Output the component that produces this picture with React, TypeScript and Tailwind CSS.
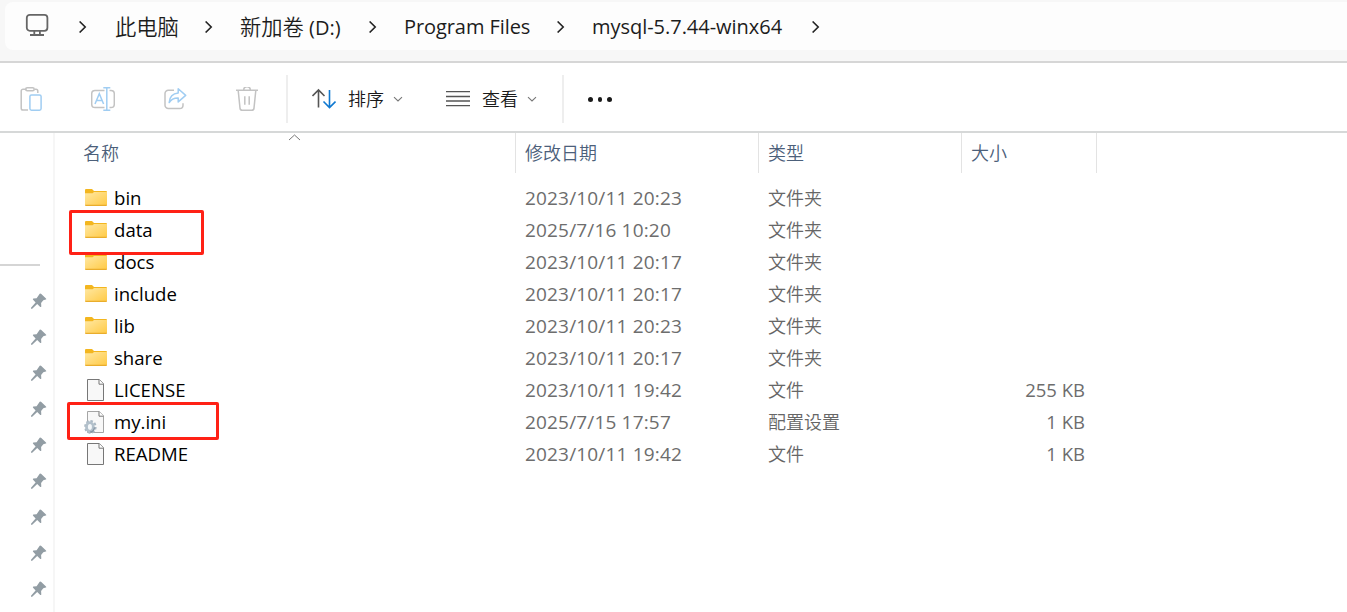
import type { ReactNode } from "react";

const crumbs = [
  { label: "此电脑", className: "w-[64px] text-[21.3px] font-[350] -ml-px mr-px" },
  { label: "新加卷", suffix: "(D:)", className: "w-[104px] text-[21.3px] font-[350] -mt-px" },
  { label: "Program Files", className: "w-[128px] text-[20px] tracking-[-0.08px]" },
  { label: "mysql-5.7.44-winx64", className: "w-[195px] text-[20px] tracking-[-0.03px]" },
];

type Kind = "folder" | "file" | "ini";

const files: { name: string; date: string; type: string; size?: string; kind: Kind }[] = [
  { name: "bin", date: "2023/10/11 20:23", type: "文件夹", kind: "folder" },
  { name: "data", date: "2025/7/16 10:20", type: "文件夹", kind: "folder" },
  { name: "docs", date: "2023/10/11 20:17", type: "文件夹", kind: "folder" },
  { name: "include", date: "2023/10/11 20:17", type: "文件夹", kind: "folder" },
  { name: "lib", date: "2023/10/11 20:23", type: "文件夹", kind: "folder" },
  { name: "share", date: "2023/10/11 20:17", type: "文件夹", kind: "folder" },
  { name: "LICENSE", date: "2023/10/11 19:42", type: "文件", size: "255 KB", kind: "file" },
  { name: "my.ini", date: "2025/7/15 17:57", type: "配置设置", size: "1 KB", kind: "ini" },
  { name: "README", date: "2023/10/11 19:42", type: "文件", size: "1 KB", kind: "file" },
];

const ChevronRight = () => (
  <svg className="h-3 w-2 shrink-0" viewBox="0 0 8 12" fill="none" stroke="#222" strokeWidth="1.6">
    <path d="M.6.5 6.2 6 .6 11.5" />
  </svg>
);

const ChevronDown = () => (
  <svg className="h-2 w-2.5 shrink-0" viewBox="0 0 10 8" fill="none" stroke="#777" strokeWidth="1.1">
    <path d="m1 2.2 4 3.8 4-3.8" />
  </svg>
);

const Monitor = () => (
  <svg className="h-6 w-6 shrink-0" viewBox="0 0 24 24" fill="none" stroke="#666" strokeWidth="1.8">
    <rect x="1.8" y="2.8" width="20.6" height="16" rx="3" />
    <path d="M9.3 19v3.6M14.9 19v3.6M5 23h14" />
  </svg>
);

const Paste = () => (
  <svg className="h-6 w-6" viewBox="0 0 24 24" fill="none" stroke="#c3c3c3" strokeWidth="1.5">
    <path d="M7.5 2.2H4A1.8 1.8 0 0 0 2.2 4v17.2A1.8 1.8 0 0 0 4 23h5M15.5 2.2H17A1.8 1.8 0 0 1 18.8 4v2" />
    <rect x="6.7" y=".8" width="8.5" height="3" rx="1.5" />
    <rect x="10.9" y="8" width="11.2" height="15.2" rx="1.6" stroke="#a0cdf2" />
  </svg>
);

const Rename = () => (
  <svg className="h-6 w-6" viewBox="0 0 24 24" fill="none" stroke="#c3c3c3" strokeWidth="1.5">
    <path d="M13.5 3.5H4A3.3 3.3 0 0 0 .7 6.8v10.4A3.3 3.3 0 0 0 4 20.5h9.5M18.5 3.5H20a3.3 3.3 0 0 1 3.3 3.3v10.4a3.3 3.3 0 0 1-3.3 3.3h-1.5" />
    <path d="M12.3.8h7M12.3 23.2h7M15.8.8v22.4M4 17 8.3 6.7 12.6 17M5.5 13.5h5.6" stroke="#a0cdf2" />
  </svg>
);

const Share = () => (
  <svg className="h-6 w-6" viewBox="0 0 24 24" fill="none" stroke="#c3c3c3" strokeWidth="1.5" strokeLinejoin="round">
    <path d="M11 3.3H5.3A3.3 3.3 0 0 0 2 6.6v11.6a3.3 3.3 0 0 0 3.3 3.3h11.4a3.3 3.3 0 0 0 3.3-3.3v-2" />
    <path d="M15.2 1.8 22.7 8.4l-7.5 6.5v-4C10.8 10.8 8 12.4 6.2 15.5 6.6 10 9.8 6.4 15.2 6V1.8Z" stroke="#a0cdf2" />
  </svg>
);

const Trash = () => (
  <svg className="h-6 w-6" viewBox="0 0 24 24" fill="none" stroke="#c3c3c3" strokeWidth="1.5">
    <path d="M1 3.2h22M3.2 3.5l1.8 17.6A2.2 2.2 0 0 0 7.2 23.2h9.6a2.2 2.2 0 0 0 2.2-2.1l1.8-17.6M8.7 3a3.3 3.3 0 0 1 6.6 0M9.8 9.3v8.4M14.2 9.3v8.4" />
  </svg>
);

const Sort = () => (
  <svg className="h-6 w-6" viewBox="0 0 24 24" fill="none" strokeWidth="1.6">
    <path d="M6.5 20.5V3M.5 9l6-6 6 6" stroke="#555" />
    <path d="M17.5 3v17.5M11.5 14.5l6 6 6-6" stroke="#0f78d0" />
  </svg>
);

const Lines = () => (
  <svg className="h-6 w-6" viewBox="0 0 24 24" stroke="#555" strokeWidth="1.3">
    <path d="M0 4.7h24M0 9.5h24M0 14h24M0 18.7h24" />
  </svg>
);

const Pin = () => (
  <svg className="h-4 w-4" viewBox="0 0 16 16" fill="#929da4">
    <path d="M8.7.7Q9.5.2 10.3.9L15 5.4q.8.8-.2 1.2l-2.5.7-2.2 2.8.2 3.3q-.4 1-1.3.3L6.2 11 1.2 15.8H0v-1.1l4.6-5.3-2.5-2.7q-.7-.8.3-1.3l3.2-.1L8.7.7Z" />
  </svg>
);

const Folder = () => (
  <svg className="h-6 w-6 shrink-0" viewBox="0 0 24 24">
    <defs>
      <linearGradient id="folder" x1="0" y1="0" x2="1" y2="1">
        <stop offset="0" stopColor="#ffe8a3" />
        <stop offset="1" stopColor="#ffca45" />
      </linearGradient>
    </defs>
    <path d="M1 4q0-1 1-1h6l2 2h12q1 0 1 1v5H1Z" fill="#f3b61f" />
    <path d="M1 7.2h7.6L10 6h13v12.5q0 1-1 1H2q-1 0-1-1Z" fill="url(#folder)" />
    <path d="M1 18.8h22q0 1.2-1 1.2H2q-1 0-1-1.2Z" fill="#e9ad2c" />
  </svg>
);

const Doc = ({ gear = false }: { gear?: boolean }) => (
  <svg className="h-6 w-6 shrink-0" viewBox="0 0 24 24">
    <path
      d="M3.5 1.5h11.8l4.2 4.3v16.7h-16Z"
      fill="#f8f8f8"
      stroke={gear ? "#a5a5a5" : "#777"}
      strokeWidth="1"
    />
    <path d="M15 1.5v4.7h4.5" fill="#fff" stroke="#777" strokeWidth="1" />
    {gear && (
      <>
        <ellipse cx="6.4" cy="16.9" rx="5.2" ry="6" fill="none" stroke="#a9b7c2" strokeWidth="2" strokeDasharray="2.5 1.8" />
        <ellipse cx="5.9" cy="16.9" rx="3.4" ry="4.2" fill="#f4f7f9" stroke="#b2c0cb" strokeWidth="2.8" />
        <path d="M6 22q4-.3 4.5-4.6" fill="none" stroke="#8495a3" strokeWidth="1.2" />
      </>
    )}
  </svg>
);

const FileIcon = ({ kind }: { kind: Kind }) => (kind === "folder" ? <Folder /> : <Doc gear={kind === "ini"} />);

const HeaderCell = ({ className, children }: { className: string; children: ReactNode }) => (
  <div
    className={`h-10 shrink-0 border-r border-[#e3e3e3] pt-2 text-[18px] leading-6 font-[350] text-[#4c607a] ${className}`}
  >
    {children}
  </div>
);

const AddressBar = () => (
  <header className="h-[63px] border-b-2 border-[#d6d6d6] bg-[#f7f7f7] pt-0.5 pl-[5px]">
    <nav className="flex h-12 items-center rounded-l-lg bg-[#fdfdfd] pt-0.5 pl-5 text-[#1c1c1c]">
      <div className="-mt-1.5">
        <Monitor />
      </div>
      <div className="flex w-[67px] pl-[30px]">
        <ChevronRight />
      </div>
      {crumbs.map((crumb) => (
        <div key={crumb.label} className="flex items-center">
          <span className={`shrink-0 whitespace-nowrap ${crumb.className}`}>
            {crumb.label}
            {crumb.suffix && <span className="text-[20px] font-normal"> {crumb.suffix}</span>}
          </span>
          <div className="flex w-[60px] pl-[25px]">
            <ChevronRight />
          </div>
        </div>
      ))}
    </nav>
  </header>
);

const Toolbar = () => (
  <div className="flex h-[70px] items-center border-b-2 border-[#d6d8d8] pt-[3px] pl-[19px] text-[18px] text-[#1a1a1a]">
    <div className="flex w-[267px] gap-12">
      <Paste />
      <Rename />
      <Share />
      <Trash />
    </div>
    <div className="flex h-12 w-[278px] items-center border-x-2 border-[#eee] pl-6">
      <Sort />
      <span className="ml-3 w-[45px] pt-0.5 font-[350]">排序</span>
      <ChevronDown />
      <div className="ml-[43px]">
        <Lines />
      </div>
      <span className="ml-3 w-[45px] pt-0.5 font-[350] whitespace-nowrap">查看</span>
      <ChevronDown />
    </div>
    <div className="flex gap-[5px] pt-0.5 pl-6">
      <i className="h-[4.5px] w-[4.5px] rounded-full bg-[#1a1a1a]" />
      <i className="h-[4.5px] w-[4.5px] rounded-full bg-[#1a1a1a]" />
      <i className="h-[4.5px] w-[4.5px] rounded-full bg-[#1a1a1a]" />
    </div>
  </div>
);

const Sidebar = () => (
  <aside className="w-[55px] shrink-0 border-r-2 border-[#f6f6f6] pt-[131px]">
    <div className="h-0.5 w-10 bg-[#d5d5d5]" />
    <div className="flex flex-col gap-5 pt-[27px] pl-[31px]">
      {Array.from({ length: 9 }, (_, i) => (
        <Pin key={i} />
      ))}
    </div>
  </aside>
);

const FileList = () => (
  <main className="relative flex-1">
    <div className="flex">
      <HeaderCell className="w-[461px] pl-7">名称</HeaderCell>
      <HeaderCell className="w-[243px] pl-[9px]">修改日期</HeaderCell>
      <HeaderCell className="w-[203px] pl-[9px]">类型</HeaderCell>
      <HeaderCell className="w-[135px] pl-[9px]">大小</HeaderCell>
    </div>
    <svg className="absolute top-0 left-[233px] h-2 w-3" viewBox="0 0 12 8" fill="none" stroke="#777">
      <path d="m1 7 5.5-5L12 7" />
    </svg>
    <div className="pt-[9px]">
      {files.map((file) => (
        <div key={file.name} className="flex h-8 items-center text-[19px] text-[#6d6d6d]">
          <div className="flex w-[470px] items-center pl-[29px] text-black">
            <FileIcon kind={file.kind} />
            <span className="ml-1.5 text-[18.6px]">{file.name}</span>
          </div>
          <span className="w-[243px] whitespace-nowrap tracking-[0.17px]">{file.date}</span>
          <span className="w-[193px] text-[18px] font-[350] text-[#666]">{file.type}</span>
          <span className="w-[124px] text-right text-[18.5px]">{file.size}</span>
        </div>
      ))}
    </div>
    {/* highlight frames over the data and my.ini rows */}
    <div className="absolute top-[77px] left-[14px] h-[45px] w-[134.5px] rounded-xs border-3 border-[#ff2116]" />
    <div className="absolute top-[269px] left-[12px] h-[38px] w-[151.5px] rounded-xs border-3 border-[#ff2116]" />
  </main>
);

const App = () => {
  return (
    <div className="flex h-[612px] w-[1347px] flex-col overflow-hidden bg-white font-['Open_Sans','Noto_Sans_CJK_SC',sans-serif]">
      <AddressBar />
      <Toolbar />
      <div className="flex min-h-0 flex-1">
        <Sidebar />
        <FileList />
      </div>
    </div>
  );
};

export default App;
